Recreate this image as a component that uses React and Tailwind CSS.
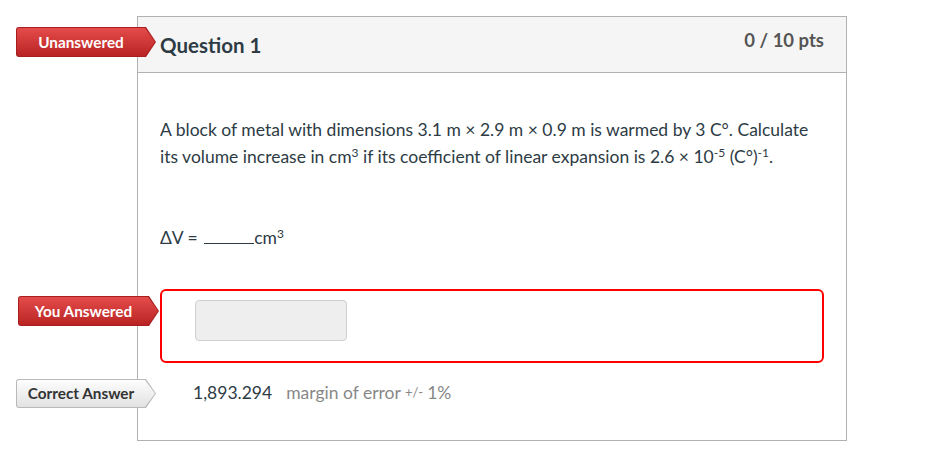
import React from 'react';

const arrow = '[clip-path:polygon(0_0,calc(100%_-_10px)_0,100%_50%,calc(100%_-_10px)_100%,0_100%)]';

function Badge({ children, tone, className }) {
  const red = tone === 'red';
  return (
    <div
      className={`absolute ${className} ${arrow} rounded-l-[3px] p-px ${
        red ? 'bg-[#a81e1e]' : 'bg-[#b9b9b9]'
      }`}
    >
      <div
        className={`${arrow} rounded-l-[2px] flex h-full items-center justify-center pr-[10px] text-[15.3px] font-bold ${
          red
            ? 'bg-gradient-to-b from-[#e54b4b] to-[#b92323] text-white'
            : 'bg-gradient-to-b from-[#fdfdfd] to-[#e2e2e2] text-[#333]'
        }`}
      >
        {children}
      </div>
    </div>
  );
}

function Sup({ children }) {
  return <sup className="text-[12px] leading-none">{children}</sup>;
}

export default function App() {
  return (
    <div className="min-h-[464px] bg-white pt-[16px] pl-[137px] font-['Lato','Noto_Sans',sans-serif] text-[#2d3b45]">
      <div className="relative w-[710px] border border-[#b1b1b1]">
        <Badge tone="red" className="left-[-122px] top-[10px] h-[30px] w-[140px]">
          Unanswered
        </Badge>
        <div className="flex h-[56px] items-start justify-between border-b border-[#b1b1b1] bg-[#f5f5f5] pl-[22px] pr-[22px]">
          <h2 className="mt-[15px] text-[20.5px] font-bold leading-[26px]">Question 1</h2>
          <div className="mt-[11px] text-[18.5px] font-bold leading-[24px] text-[#555]">0 / 10 pts</div>
        </div>

        <div className="px-[22px] pt-[43px]">
          <p className="text-[17.5px] leading-[27px]">
            A block of metal with dimensions 3.1 m × 2.9 m × 0.9 m is warmed by 3 C°. Calculate its
            volume increase in cm<Sup>3</Sup> if its coefficient of linear expansion is 2.6 × 10
            <Sup>-5</Sup> (C°)<Sup>-1</Sup>.
          </p>
          <p className="mt-[54px] text-[17.5px] leading-[27px]">
            ΔV = <span className="ml-[2px] inline-block w-[50px] border-b border-[#2d3b45] align-baseline"></span>
            cm<Sup>3</Sup>
          </p>
        </div>

        <div className="relative mt-[38px] px-[22px]">
          <Badge tone="red" className="left-[-120px] top-[7px] h-[30px] w-[141px]">
            You Answered
          </Badge>
          <div className="h-[74px] rounded-[6px] border-2 border-[#ff0000] pt-[9px] pl-[33px]">
            <div className="h-[41px] w-[152px] rounded-[4px] border border-[#cfcfcf] bg-[#eeeeee]"></div>
          </div>
        </div>

        <div className="relative mt-[16px] flex h-[28px] items-center pl-[55px] text-[17.5px]">
          <Badge tone="gray" className="left-[-122px] top-0 h-[29px] w-[140px]">
            Correct Answer
          </Badge>
          <span className="text-[#2d3b45]">1,893.294</span>
          <span className="ml-[14px] text-[#888]">margin of error</span>
          <span className="ml-[4px] text-[13px] text-[#888]">+/-</span>
          <span className="ml-[4px] text-[#888]">1%</span>
        </div>
        <div className="h-[33px]"></div>
      </div>
    </div>
  );
}
